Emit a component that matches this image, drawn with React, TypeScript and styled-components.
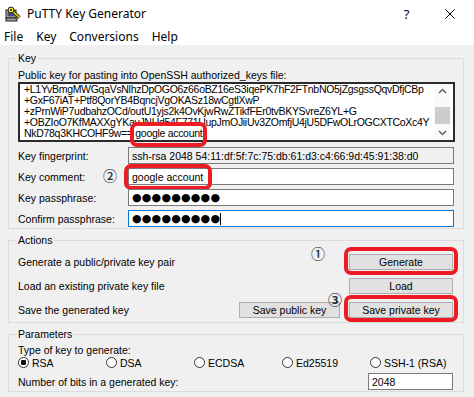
import * as React from 'react';
import styled, { createGlobalStyle } from 'styled-components';

const UI_FONT = `"Liberation Sans", Arial, sans-serif`;
const TITLE_FONT = `"Noto Sans", "Open Sans", sans-serif`;
const CJK_FONT = `"Noto Sans CJK JP", "Noto Sans", sans-serif`;
const RED = '#ec1c24';

const GlobalStyle = createGlobalStyle`
  html, body {
    margin: 0;
    padding: 0;
    background: #f0f0f0;
  }
  body {
    width: 474px;
    height: 397px;
    overflow: hidden;
  }
`;

const Window = styled.div`
  width: 474px;
  height: 397px;
  display: flex;
  flex-direction: column;
  background: #f0f0f0;
  font-family: ${UI_FONT};
  font-size: 10.5px;
  color: #000;
`;

const TitleBar = styled.div`
  height: 27px;
  display: flex;
  align-items: center;
  padding: 0 3px 0 5px;
  background: #fff;
`;

const Title = styled.div`
  flex: 1;
  margin-left: 6px;
  font-family: ${TITLE_FONT};
  font-size: 12px;
`;

const TitleButton = styled.div`
  width: 43px;
  display: flex;
  justify-content: center;
  align-items: center;
  font-family: ${TITLE_FONT};
  font-size: 13px;
`;

const MenuBar = styled.div`
  height: 18px;
  display: flex;
  align-items: center;
  gap: 13px;
  padding-left: 4px;
  background: #fff;
  font-family: ${TITLE_FONT};
  font-size: 12px;
`;

const Content = styled.div`
  display: flex;
  flex-direction: column;
  gap: 5px;
  padding: 7px 10px 0 8px;
`;

const Group = styled.fieldset<{ $pad: string }>`
  margin: 0;
  min-width: 0;
  border: 1px solid #dcdcdc;
  padding: ${({ $pad }) => $pad};
  display: flex;
  flex-direction: column;
`;

const Legend = styled.legend`
  padding: 0 2px;
  margin-left: -2px;
  line-height: 13px;
`;

const Caption = styled.div<{ $top?: number }>`
  line-height: 12px;
  margin-top: ${({ $top }) => $top ?? 0}px;
  white-space: nowrap;
`;

const KeyBox = styled.div`
  height: 60px;
  margin-top: 1px;
  box-sizing: border-box;
  border: 2px solid #2b2b2b;
  background: #fff;
  display: flex;
`;

const KeyLines = styled.div`
  flex: 1;
  min-width: 0;
  padding-left: 4px;
`;

const KeyLine = styled.div`
  line-height: 11px;
  white-space: nowrap;
  letter-spacing: -0.3px;
`;

const ScrollBar = styled.div`
  width: 17px;
  margin-right: 2px;
  display: flex;
  flex-direction: column;
  background: #fafafa;
`;

const ScrollArrow = styled.div`
  height: 14px;
  display: flex;
  align-items: center;
  justify-content: center;
`;

const ScrollTrack = styled.div`
  flex: 1;
  display: flex;
  justify-content: center;
`;

const ScrollThumb = styled.div`
  width: 15px;
  height: 17px;
  margin-top: 9px;
  background: #cdcdcd;
`;

const Rows = styled.div<{ $gap: number; $top: number }>`
  display: flex;
  flex-direction: column;
  gap: ${({ $gap }) => $gap}px;
  margin-top: ${({ $top }) => $top}px;
`;

const FieldRow = styled.div`
  height: 17px;
  display: flex;
  align-items: center;
  position: relative;
`;

const FieldLabel = styled.div`
  width: 110px;
  white-space: nowrap;
`;

const Field = styled.div<{ $readOnly?: boolean; $focused?: boolean; $width?: number }>`
  position: relative;
  ${({ $width }) => ($width ? `width: ${$width}px;` : 'flex: 1; margin-right: 1px;')}
  height: 17px;
  box-sizing: border-box;
  display: flex;
  align-items: center;
  padding-left: 3px;
  border: 1px solid ${({ $focused }) => ($focused ? '#0078d7' : '#7a7a7a')};
  background: ${({ $readOnly }) => ($readOnly ? '#f0f0f0' : '#fff')};
  white-space: nowrap;
`;

const Dots = styled.span`
  font-family: "DejaVu Sans", sans-serif;
  font-size: 11px;
  letter-spacing: 0.2px;
  line-height: 15px;
`;

const Caret = styled.span`
  display: inline-block;
  width: 1px;
  height: 12px;
  margin-left: 0;
  background: #000;
`;

const Highlight = styled.span<{ $inset: string }>`
  position: relative;
  display: inline-block;
  &::after {
    content: '';
    position: absolute;
    inset: ${({ $inset }) => $inset};
    border: 4px solid ${RED};
    border-radius: 7px;
    pointer-events: none;
  }
`;

const Annotation = styled.span<{ $left: number; $top: number; $bold?: boolean }>`
  position: absolute;
  left: ${({ $left }) => $left}px;
  top: ${({ $top }) => $top}px;
  font-family: ${CJK_FONT};
  font-size: 14px;
  line-height: 14px;
  font-weight: ${({ $bold }) => ($bold ? 700 : 500)};
  color: #1e2a3a;
`;

const ActionRow = styled.div`
  height: 16px;
  display: flex;
  align-items: center;
  gap: 9px;
`;

const ActionText = styled.div`
  flex: 1;
  white-space: nowrap;
`;

const ButtonSlot = styled.div`
  position: relative;
  display: flex;
`;

const Button = styled.button<{ $width: number }>`
  width: ${({ $width }) => $width}px;
  height: 16px;
  margin: 0;
  padding: 0;
  box-sizing: border-box;
  border: 1px solid #adadad;
  background: #e1e1e1;
  font-family: ${UI_FONT};
  font-size: 10.5px;
  color: #000;
`;

const RadioGrid = styled.div`
  height: 13px;
  display: grid;
  grid-template-columns: repeat(5, 88px);
  align-items: center;
`;

const RadioItem = styled.label`
  display: flex;
  align-items: center;
  gap: 3px;
  white-space: nowrap;
`;

const RadioCircle = styled.span<{ $checked?: boolean }>`
  width: 11px;
  height: 11px;
  box-sizing: border-box;
  border-radius: 50%;
  border: 1px solid #333;
  background: #fff;
  display: flex;
  align-items: center;
  justify-content: center;
  &::after {
    content: '';
    width: 5px;
    height: 5px;
    border-radius: 1px;
    background: ${({ $checked }) => ($checked ? '#111' : 'transparent')};
  }
`;

const BitsRow = styled.div`
  height: 17px;
  margin-top: 4px;
  display: flex;
  align-items: center;
  justify-content: space-between;
`;

const PuttyIcon = () => (
  <svg width="16" height="16" viewBox="0 0 16 16">
    <rect x="1" y="4" width="10" height="8" fill="#c0c0c0" stroke="#202020" />
    <rect x="2.5" y="5.5" width="7" height="5" fill="#405080" />
    <rect x="1" y="12" width="11" height="3" fill="#a0a0a0" stroke="#202020" />
    <line x1="7" y1="5" x2="14.5" y2="11.5" stroke="#202020" strokeWidth="3.2" />
    <line x1="7" y1="5" x2="14.5" y2="11.5" stroke="#f2e200" strokeWidth="1.6" />
    <circle cx="6" cy="4" r="3" fill="#f2e200" stroke="#202020" />
    <circle cx="6" cy="4" r="1" fill="#202020" />
  </svg>
);

const CloseGlyph = () => (
  <svg width="10" height="10" viewBox="0 0 10 10">
    <path d="M0.5 0.5 L9.5 9.5 M9.5 0.5 L0.5 9.5" stroke="#000" strokeWidth="1" />
  </svg>
);

const Chevron = ({ up }: { up?: boolean }) => (
  <svg width="9" height="6" viewBox="0 0 9 6">
    <polyline
      points={up ? '1,5 4.5,1.5 8,5' : '1,1 4.5,4.5 8,1'}
      fill="none"
      stroke="#606060"
      strokeWidth="1.5"
    />
  </svg>
);

const keyLines = [
  '+L1YvBmgMWGqaVsNlhzDpOGO6z66oBZ16eS3iqePK7hF2FTnbNO5jZgsgssQqvDfjCBp',
  '+GxF67iAT+Ptf8QorYB4BqncjVgOKASz18wCgtlXwP',
  '+zPrnWiP7udbahzOCd/outU1yjs2k4OvKjwRwZTikfFEr0tvBKYSvreZ6YL+G',
  '+OBZIoO7KfMAXXgYKavJNHd54F771UupJmOJiiUv3ZOmfjU4jU5DFwOLrOGCXTCoXc4Y',
];

const radios = ['RSA', 'DSA', 'ECDSA', 'Ed25519', 'SSH-1 (RSA)'];
const DOTS = '●●●●●●●●●';

const App = () => (
  <>
    <GlobalStyle />
    <Window>
      <TitleBar>
        <PuttyIcon />
        <Title>PuTTY Key Generator</Title>
        <TitleButton>?</TitleButton>
        <TitleButton><CloseGlyph /></TitleButton>
      </TitleBar>
      <MenuBar>
        <span>File</span>
        <span>Key</span>
        <span>Conversions</span>
        <span>Help</span>
      </MenuBar>

      <Content>
        <Group $pad="0 8px 1px 9px">
          <Legend>Key</Legend>
          <Caption $top={4}>Public key for pasting into OpenSSH authorized_keys file:</Caption>
          <KeyBox>
            <KeyLines>
              {keyLines.map((line) => <KeyLine key={line}>{line}</KeyLine>)}
              <KeyLine>
                NkD78q3KHCOHF9w== <Highlight $inset="-6px -5px -8px -5px">google account</Highlight>
              </KeyLine>
            </KeyLines>
            <ScrollBar>
              <ScrollArrow><Chevron up /></ScrollArrow>
              <ScrollTrack><ScrollThumb /></ScrollTrack>
              <ScrollArrow><Chevron /></ScrollArrow>
            </ScrollBar>
          </KeyBox>

          <Rows $gap={4} $top={5}>
            <FieldRow>
              <FieldLabel>Key fingerprint:</FieldLabel>
              <Field $readOnly>ssh-rsa 2048 54:11:df:5f:7c:75:db:61:d3:c4:66:9d:45:91:38:d0</Field>
            </FieldRow>
            <FieldRow>
              <FieldLabel>Key comment:</FieldLabel>
              <Annotation $left={85} $top={0}>②</Annotation>
              <Field>
                <Highlight $inset="-7px -9px -7px -8px">google account</Highlight>
              </Field>
            </FieldRow>
            <FieldRow>
              <FieldLabel>Key passphrase:</FieldLabel>
              <Field><Dots>{DOTS}</Dots></Field>
            </FieldRow>
            <FieldRow>
              <FieldLabel>Confirm passphrase:</FieldLabel>
              <Field $focused><Dots>{DOTS}</Dots><Caret /></Field>
            </FieldRow>
          </Rows>
        </Group>

        <Group $pad="0 10px 4px 9px">
          <Legend>Actions</Legend>
          <Rows $gap={8} $top={7}>
            <ActionRow>
              <ActionText>Generate a public/private key pair</ActionText>
              <ButtonSlot>
                <Annotation $left={-38} $top={-8}>①</Annotation>
                <Highlight $inset="-7px -5px -5px -5px">
                  <Button $width={104}>Generate</Button>
                </Highlight>
              </ButtonSlot>
            </ActionRow>
            <ActionRow>
              <ActionText>Load an existing private key file</ActionText>
              <Button $width={104}>Load</Button>
            </ActionRow>
            <ActionRow>
              <ActionText>Save the generated key</ActionText>
              <Button $width={101}>Save public key</Button>
              <ButtonSlot>
                <Highlight $inset="-7px -5px -4px -5px">
                  <Button $width={104}>Save private key</Button>
                </Highlight>
                <Annotation $left={-21} $top={-10} $bold>③</Annotation>
              </ButtonSlot>
            </ActionRow>
          </Rows>
        </Group>

        <Group $pad="0 10px 1px 9px">
          <Legend>Parameters</Legend>
          <Caption $top={3}>Type of key to generate:</Caption>
          <RadioGrid>
            {radios.map((name, i) => (
              <RadioItem key={name}>
                <RadioCircle $checked={i === 0} />
                {name}
              </RadioItem>
            ))}
          </RadioGrid>
          <BitsRow>
            <span>Number of bits in a generated key:</span>
            <Field $width={85}>2048</Field>
          </BitsRow>
        </Group>
      </Content>
    </Window>
  </>
);

export default App;
